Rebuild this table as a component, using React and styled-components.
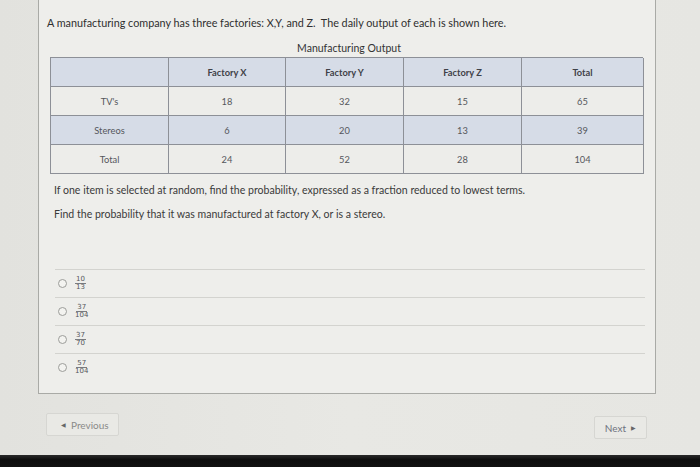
import React from "react";
import styled, { createGlobalStyle } from "styled-components";

const Global = createGlobalStyle`
  html, body { margin: 0; padding: 0; }
  body {
    background: #e5e5e1;
    font-family: Lato, "Open Sans", sans-serif;
    color: #3a3a3a;
  }
`;

const Screen = styled.div`
  width: 700px;
  height: 467px;
  display: flex;
  flex-direction: column;
  overflow: hidden;
  background: linear-gradient(90deg, #e2e2de 0%, #e8e8e4 50%, #e6e6e2 100%);
`;

const Upper = styled.div`
  display: flex;
  padding-left: 38px;
`;

const Panel = styled.div`
  width: 618px;
  height: 394px;
  box-sizing: border-box;
  border: 1px solid #a9aaa6;
  border-top: none;
  background: #eeeeeb;
  padding: 16px 0 0 8px;
  display: flex;
  flex-direction: column;
`;

const Question = styled.div`
  font-size: 10.8px;
  line-height: 14px;
  color: #2f2f2f;
  white-space: pre;
`;

const Caption = styled.div`
  margin-top: 11px;
  width: 604px;
  text-align: center;
  font-size: 10.5px;
  line-height: 14px;
  color: #333;
`;

const Table = styled.div`
  margin: 2px 0 0 3px;
  width: 593px;
  display: grid;
  grid-template-columns: 118px 117px 118px 118px 122px;
  border-top: 1px solid #8d9097;
  border-left: 1px solid #8d9097;
  box-sizing: border-box;
`;

const Cell = styled.div`
  height: 29px;
  box-sizing: border-box;
  border-right: 1px solid #8d9097;
  border-bottom: 1px solid #8d9097;
  background: ${(p) => (p.$tint ? "#d6dce7" : "#ededea")};
  display: flex;
  align-items: center;
  justify-content: center;
  font-size: 9.3px;
  font-weight: ${(p) => (p.$head ? 700 : 400)};
  color: ${(p) => (p.$head ? "#3f4148" : "#55575c")};
`;

const Prompt = styled.div`
  margin: ${(p) => p.$top}px 0 0 7px;
  font-size: 10.55px;
  line-height: 12px;
  color: #3a3a3a;
`;

const Choices = styled.div`
  margin: 49px 0 0 8px;
  width: 590px;
  display: flex;
  flex-direction: column;
`;

const Choice = styled.div`
  height: 27px;
  border-top: 1px solid #d3d3cf;
  display: flex;
  align-items: center;
  gap: 8px;
  padding-left: 3px;
`;

const Radio = styled.span`
  width: 7px;
  height: 7px;
  border-radius: 50%;
  border: 1px solid #9c9d9a;
  background: #f3f3f0;
`;

const Frac = styled.span`
  display: inline-flex;
  flex-direction: column;
  align-items: center;
  font-size: 7px;
  line-height: 7.5px;
  color: #55575c;
  font-family: "DejaVu Sans", sans-serif;
`;

const Num = styled.span`
  border-bottom: 1px solid #7a7c80;
  padding: 0 1px;
`;

const Footer = styled.div`
  height: 61px;
  display: flex;
  justify-content: space-between;
  padding: 19px 53px 0 46px;
  box-sizing: border-box;
`;

const NavButton = styled.div`
  height: 23px;
  margin-top: ${(p) => p.$drop}px;
  padding: 0 ${(p) => (p.$next ? 10 : 9)}px 0 ${(p) => (p.$next ? 10 : 14)}px;
  box-sizing: border-box;
  border: 1px solid #d6d6d2;
  border-radius: 2px;
  display: flex;
  align-items: center;
  gap: 5px;
  font-size: 10px;
  color: ${(p) => (p.$next ? "#6f7380" : "#8a8a88")};
  background: #e9e9e5;
`;

const Caret = styled.span`
  font-size: 6px;
  color: #666;
`;

const BlackBar = styled.div`
  flex: 1;
  background: linear-gradient(180deg, #2a2a2a 0%, #0d0d0d 40%, #111 100%);
`;

const rows = [
  { tint: true, head: true, cells: ["", "Factory X", "Factory Y", "Factory Z", "Total"] },
  { cells: ["TV's", "18", "32", "15", "65"] },
  { tint: true, cells: ["Stereos", "6", "20", "13", "39"] },
  { cells: ["Total", "24", "52", "28", "104"] },
];

const choices = [
  ["10", "13"],
  ["37", "104"],
  ["37", "70"],
  ["57", "104"],
];

export default function App() {
  return (
    <Screen>
      <Global />
      <Upper>
        <Panel>
          <Question>
            A manufacturing company has three factories: X,Y, and Z.  The daily output of each is shown here.
          </Question>
          <Caption>Manufacturing Output</Caption>
          <Table>
            {rows.map((r, i) =>
              r.cells.map((c, j) => (
                <Cell key={`${i}-${j}`} $tint={r.tint} $head={r.head}>
                  {c}
                </Cell>
              ))
            )}
          </Table>
          <Prompt $top={10}>
            If one item is selected at random, find the probability, expressed as a fraction reduced to lowest terms.
          </Prompt>
          <Prompt $top={12}>
            Find the probability that it was manufactured at factory X, or is a stereo.
          </Prompt>
          <Choices>
            {choices.map(([n, d]) => (
              <Choice key={n + d}>
                <Radio />
                <Frac>
                  <Num>{n}</Num>
                  <span>{d}</span>
                </Frac>
              </Choice>
            ))}
          </Choices>
        </Panel>
      </Upper>
      <Footer>
        <NavButton $drop={0}>
          <Caret>◀</Caret>
          Previous
        </NavButton>
        <NavButton $next $drop={3}>
          Next
          <Caret>▶</Caret>
        </NavButton>
      </Footer>
      <BlackBar />
    </Screen>
  );
}
